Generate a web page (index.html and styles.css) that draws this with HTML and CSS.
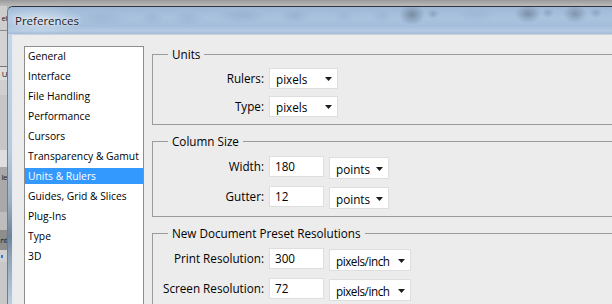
FILE: index.html
```html
<!DOCTYPE html>
<html>
<head>
<meta charset="utf-8">
<link rel="stylesheet" href="styles.css">
</head>
<body>
<div class="screen">
  <div class="topstrip"></div>
  <div class="main">
    <div class="leftstrip">
      <div class="ls ls1"><span>el</span></div>
      <div class="ls ls2"></div>
      <div class="ls ls3"></div>
      <div class="ls ls4"><span>U</span></div>
      <div class="ls ls5"></div>
      <div class="ls ls6"></div>
      <div class="ls ls7"></div>
      <div class="ls ls8"><span>le</span></div>
      <div class="ls ls9"></div>
      <div class="ls ls10"><span>nt</span></div>
      <div class="ls ls11"><i class="dot"></i></div>
      <div class="ls ls12"></div>
    </div>
    <div class="window">
      <div class="titlebar"><span class="title">Preferences</span></div>
      <div class="client">
        <ul class="list">
          <li>General</li>
          <li>Interface</li>
          <li>File Handling</li>
          <li>Performance</li>
          <li>Cursors</li>
          <li>Transparency &amp; Gamut</li>
          <li class="sel">Units &amp; Rulers</li>
          <li>Guides, Grid &amp; Slices</li>
          <li>Plug-Ins</li>
          <li>Type</li>
          <li>3D</li>
        </ul>
        <div class="panel">
          <fieldset class="group g1">
            <legend>Units</legend>
            <div class="rows">
              <div class="lbl">Rulers:</div>
              <div class="select w69"><span>pixels</span><svg class="arr" width="7" height="4" viewBox="0 0 7 4"><polygon points="0,0 7,0 3.5,4"/></svg></div>
              <div class="lbl">Type:</div>
              <div class="select w69"><span>pixels</span><svg class="arr" width="7" height="4" viewBox="0 0 7 4"><polygon points="0,0 7,0 3.5,4"/></svg></div>
            </div>
          </fieldset>
          <fieldset class="group">
            <legend>Column Size</legend>
            <div class="rows">
              <div class="lbl">Width:</div>
              <div class="field">180</div>
              <div class="select lo w60"><span>points</span><svg class="arr" width="7" height="4" viewBox="0 0 7 4"><polygon points="0,0 7,0 3.5,4"/></svg></div>
              <div class="lbl">Gutter:</div>
              <div class="field">12</div>
              <div class="select lo w60"><span>points</span><svg class="arr" width="7" height="4" viewBox="0 0 7 4"><polygon points="0,0 7,0 3.5,4"/></svg></div>
            </div>
          </fieldset>
          <fieldset class="group">
            <legend>New Document Preset Resolutions</legend>
            <div class="rows">
              <div class="lbl">Print Resolution:</div>
              <div class="field">300</div>
              <div class="select lo w82"><span>pixels/inch</span><svg class="arr" width="7" height="4" viewBox="0 0 7 4"><polygon points="0,0 7,0 3.5,4"/></svg></div>
              <div class="lbl">Screen Resolution:</div>
              <div class="field">72</div>
              <div class="select lo w82"><span>pixels/inch</span><svg class="arr" width="7" height="4" viewBox="0 0 7 4"><polygon points="0,0 7,0 3.5,4"/></svg></div>
            </div>
          </fieldset>
        </div>
      </div>
    </div>
  </div>
</div>
</body>
</html>
```
FILE: styles.css
```css
* { box-sizing: border-box; }
html, body { margin: 0; padding: 0; }
body {
  font-family: "Open Sans", "Noto Sans", sans-serif;
  color: #000;
  overflow: hidden;
}
.screen {
  width: 612px;
  height: 304px;
  overflow: hidden;
  display: flex;
  flex-direction: column;
  background: #b5b5b5;
}
.topstrip {
  height: 6px;
  flex: none;
  background: linear-gradient(#9a9a9a, #bcbcbc);
}
.main {
  flex: 1;
  display: flex;
  min-height: 0;
}
.leftstrip {
  width: 7px;
  flex: none;
  display: flex;
  flex-direction: column;
  overflow: hidden;
  font-size: 8px;
  letter-spacing: -0.5px;
  line-height: 1;
  color: #202020;
}
.ls {
  flex: none;
  display: flex;
  justify-content: flex-end;
  align-items: center;
  overflow: hidden;
  white-space: nowrap;
}
.ls1 { height: 24px; background: #cdcdcd; }
.ls2 { height: 1px; background: #8a8a8a; }
.ls3 { height: 35px; background: #d3d3d3; }
.ls4 { height: 14px; background: #dadada; border-top: 1px solid #777; }
.ls5 { height: 15px; background: #cfcfcf; }
.ls6 { height: 55px; background: #c6c6c6; }
.ls7 { height: 17px; background: #dedede; }
.ls8 { height: 45px; background: #a9a9a9; align-items: flex-start; padding-top: 6px; }
.ls9 { height: 18px; background: #bdbdbd; }
.ls10 { height: 20px; background: #8e8e8e; }
.ls11 { height: 12px; background: #d0d0d0; justify-content: flex-start; padding-left: 1px; }
.ls12 { height: 50px; background: #c8c8c8; }
.dot { display: block; width: 2px; height: 3px; background: #2a7de0; }

.window {
  flex: 1;
  min-width: 0;
  display: flex;
  flex-direction: column;
  border-top: 1px solid #2e3540;
  border-left: 1px solid #6a7d92;
  border-top-left-radius: 6px;
  overflow: hidden;
  background: linear-gradient(#a6c0dc 0px, #c3d6ea 29px, #b8cade 144px, #9db0c5 194px, #70839a 229px, #8ea2b8 249px, #bfcfe0 298px);
}
.titlebar {
  height: 27px;
  flex: none;
  display: flex;
  align-items: center;
  padding-left: 7px;
  background:
    radial-gradient(45px 15px at 30px 13px, rgba(255,255,255,0.45), rgba(255,255,255,0)),
    radial-gradient(26px 7px at 95px 11px, rgba(70,95,130,0.10), rgba(70,95,130,0)),
    radial-gradient(12px 7px at 144px 11px, rgba(70,95,130,0.10), rgba(70,95,130,0)),
    radial-gradient(16px 7px at 180px 11px, rgba(70,95,130,0.10), rgba(70,95,130,0)),
    radial-gradient(26px 7px at 234px 9px, rgba(60,85,120,0.13), rgba(60,85,120,0)),
    radial-gradient(16px 7px at 287px 9px, rgba(60,85,120,0.13), rgba(60,85,120,0)),
    radial-gradient(11px 7px at 336px 9px, rgba(70,95,130,0.09), rgba(70,95,130,0)),
    radial-gradient(11px 7px at 374px 9px, rgba(70,95,130,0.09), rgba(70,95,130,0)),
    radial-gradient(13px 10px at 404px 8px, rgba(45,55,70,0.38), rgba(45,55,70,0)),
    radial-gradient(6px 5px at 425px 7px, rgba(45,55,70,0.2), rgba(45,55,70,0)),
    radial-gradient(20px 7px at 468px 8px, rgba(70,95,130,0.08), rgba(70,95,130,0)),
    radial-gradient(13px 9px at 520px 7px, rgba(45,55,70,0.34), rgba(45,55,70,0)),
    radial-gradient(6px 5px at 540px 6px, rgba(45,55,70,0.18), rgba(45,55,70,0)),
    radial-gradient(12px 9px at 567px 7px, rgba(45,55,70,0.3), rgba(45,55,70,0)),
    radial-gradient(6px 5px at 588px 6px, rgba(45,55,70,0.18), rgba(45,55,70,0)),
    linear-gradient(#9db7d5 0%, #a9c3df 40%, #a3bdda 70%, #b4cbe3 88%, #a2bbd6 100%);
}
.title {
  font-size: 11.5px;
  color: #1a1a1a;
  text-shadow: 0 0 5px rgba(255,255,255,0.9), 0 0 2px rgba(255,255,255,0.7);
}
.client {
  flex: 1;
  min-height: 0;
  margin-left: 4px;
  border-top: 1px solid #c8d2dd;
  border-left: 1px solid #e4eaf0;
  background: #ececec;
  display: flex;
  align-items: flex-start;
  padding: 11px 0 0 11px;
  overflow: hidden;
}
.list {
  list-style: none;
  margin: 0;
  padding: 1px 0 0;
  width: 120px;
  height: 280px;
  flex: none;
  border: 1px solid #8d8d8d;
  background: #fff;
  font-size: 10.3px;
}
.list li {
  height: 16px;
  line-height: 16px;
  padding-left: 3px;
  margin-bottom: 4px;
  white-space: nowrap;
}
.list li.sel {
  background: #3399ff;
  color: #fff;
}
.panel {
  margin-left: 8px;
  margin-top: 1px;
  width: 480px;
  flex: none;
  font-size: 11.7px;
}
.group {
  margin: 0 0 9px;
  padding: 0;
  border: 1px solid #9b9b9b;
  min-width: 0;
}
.group legend {
  margin-left: 15px;
  padding: 0 4px;
  line-height: 14px;
  font-size: 11.7px;
}
.rows {
  display: grid;
  grid-template-columns: 111px max-content max-content;
  column-gap: 5px;
  row-gap: 7px;
  padding: 8px 0 7px;
  align-items: start;
}
.g1 .rows {
  grid-template-columns: 111px max-content;
  padding-top: 7px;
}
.lbl {
  text-align: right;
  line-height: 21px;
  white-space: nowrap;
}
.field {
  height: 21px;
  width: 55px;
  background: #fff;
  border: 1px solid #dedede;
  padding-left: 5px;
  line-height: 19px;
}
.select {
  height: 21px;
  display: flex;
  align-items: center;
  justify-content: space-between;
  background: #fff;
  border: 1px solid #dedede;
  padding: 0 5px 0 6px;
  white-space: nowrap;
}
.select.lo {
  height: 22px;
  margin-top: 1px;
  padding-top: 1px;
}
.select.w82 { letter-spacing: -0.45px; }
.arr { fill: #1c1c1c; flex: none; }
.w69 { width: 69px; }
.w60 { width: 60px; }
.w82 { width: 82px; }
```
